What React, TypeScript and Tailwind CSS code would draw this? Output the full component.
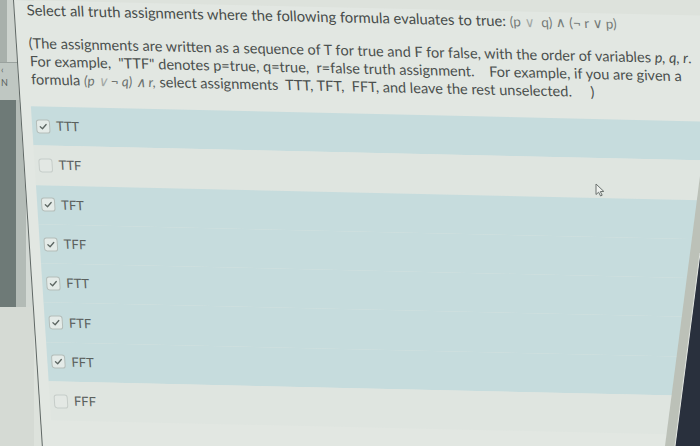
const options = [
  { label: "TTT", checked: true },
  { label: "TTF", checked: false },
  { label: "TFT", checked: true },
  { label: "TFF", checked: true },
  { label: "FTT", checked: true },
  { label: "FTF", checked: true },
  { label: "FFT", checked: true },
  { label: "FFF", checked: false },
];

const Check = () => (
  <svg viewBox="0 0 14 14" className="h-[14px] w-[14px]">
    <polyline
      points="3.6,7.4 6,9.6 10.6,4.6"
      fill="none"
      stroke="#5c6662"
      strokeWidth="1.5"
      strokeLinecap="round"
      strokeLinejoin="round"
    />
  </svg>
);

const Option = ({ label, checked }: { label: string; checked: boolean }) => (
  <label
    className={`flex h-[39.3px] items-center pl-[4px] ${
      checked ? "bg-[#c6dcdd]" : "bg-[#dfe5e0]"
    }`}
  >
    <span
      className={`flex h-[14px] w-[14px] items-center justify-center rounded-[3px] border ${
        checked
          ? "border-[#b4bdb9] bg-[#e4ebe8]"
          : "border-[#c6cdc9] bg-[#e3e8e4]"
      }`}
    >
      {checked && <Check />}
    </span>
    <span className="ml-[6px] text-[13px] leading-none text-[#5b615e]">
      {label}
    </span>
  </label>
);

export default function App() {
  return (
    <div className="relative grid h-[446px] w-[700px] overflow-hidden bg-[#dde2dc] font-['Lato',sans-serif]">
      {/* browser side strip */}
      <div className="col-start-1 row-start-1 flex h-full w-[34px] flex-col bg-[#d3d9d4]">
        <div className="flex h-[62px]">
          <div className="w-[7px] bg-[#a8b0ab]" />
          <div className="flex-1 bg-[#cdd3ce]" />
        </div>
        <div className="flex h-[38px] flex-col border-t border-[#9aa29e] bg-[#bfc7c2] pl-[1px] text-[9px] leading-[13px] text-[#59615e]">
          <span>‹</span>
          <span>N</span>
        </div>
        <div className="flex h-[207px]">
          <div className="w-[16px] bg-[#6e7a77]" />
          <div className="w-[10px] bg-[#b3bbb6]" />
        </div>
        <div className="flex-1 bg-[#d5dad4]" />
      </div>

      {/* quiz page */}
      <div className="col-start-1 row-start-1 ml-[13px] h-[446px] w-[720px] origin-top-left border-l-[1.5px] border-[#5f6764] bg-[#e2e7e2] pl-[10px] [transform:skewX(3.7deg)_skewY(1.3deg)]">
        <p className="whitespace-pre pl-[2px] text-[14.75px] leading-[18px] text-[#474c4a]">
          Select all truth assignments where the following formula evaluates
          to true:{" "}
          <span className="text-[13.5px] text-[#747a77]">
            (p <span className="text-[#a3a9a6]">∨</span>  q) ∧ (¬ r ∨ p)
          </span>
        </p>
        <div className="mt-[15px] pl-[2px] text-[14.5px] leading-[18px] text-[#4b504e]">
          <p className="whitespace-pre">
            (The assignments are written as a sequence of T for true and F for
            false, with the order of variables <i>p, q, r</i>.
          </p>
          <p className="whitespace-pre">
            {"For example,  \"TTF\" denotes p=true, q=true,  r=false truth assignment.    For example, if you are given a"}
          </p>
          <p className="whitespace-pre">
            {"formula "}
            <i className="text-[13.5px] text-[#6b716e]">
              (p <span className="text-[#a3a9a6]">∨</span> ¬ q) ∧ r,
            </i>
            {" select assignments  TTT, TFT,  FFT, and leave the rest unselected.     )"}
          </p>
        </div>
        <div className="mt-[18px] flex flex-col">
          {options.map((o) => (
            <Option key={o.label} label={o.label} checked={o.checked} />
          ))}
        </div>
      </div>

      {/* mouse pointer */}
      <svg
        viewBox="0 0 10 14"
        className="absolute left-[595px] top-[183px] h-[14px] w-[10px]"
      >
        <path
          d="M1 1 L1 11.5 L3.6 9.2 L5.6 13 L7.2 12.2 L5.3 8.6 L8.8 8.4 Z"
          fill="#eef1ee"
          stroke="#6a716e"
          strokeWidth="1"
          strokeLinejoin="round"
        />
      </svg>

      {/* monitor bezel at the lower right */}
      <svg
        viewBox="0 0 700 446"
        className="pointer-events-none absolute inset-0 h-[446px] w-[700px]"
      >
        <polygon points="700,176 700,253 675,446 665,446" fill="#bcc1b8" />
        <polygon points="700,253 700,446 675,446" fill="#29303d" />
        <line x1="700" y1="253" x2="675" y2="446" stroke="#e4e7e2" strokeWidth="1" />
      </svg>
    </div>
  );
}
